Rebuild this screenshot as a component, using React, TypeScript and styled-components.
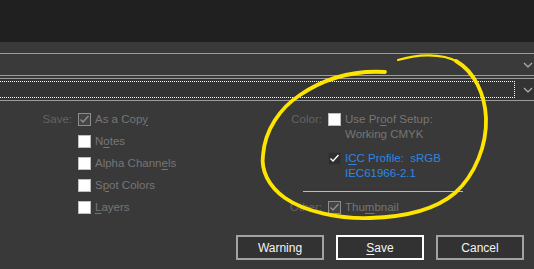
import React from "react";
import styled, { createGlobalStyle } from "styled-components";

const Global = createGlobalStyle`
  html, body { margin: 0; padding: 0; }
  body {
    background: #393939;
    font-family: "Liberation Sans", Arial, sans-serif;
    font-size: 11.5px;
    overflow: hidden;
  }
`;

const Page = styled.div`
  position: relative;
  width: 534px;
  height: 269px;
  background: #393939;
  display: flex;
  flex-direction: column;
  overflow: hidden;
`;

const TopBar = styled.div`
  height: 42px;
  background: #202020;
  flex: none;
`;

const Combo = styled.div<{ $focused?: boolean }>`
  box-sizing: border-box;
  height: 23px;
  margin-top: ${(p) => (p.$focused ? "2px" : "11px")};
  border-top: 1px solid #9c9c9c;
  border-bottom: 1px solid #9c9c9c;
  background: ${(p) => (p.$focused ? "#333333" : "#3a3a3a")};
  display: flex;
  align-items: center;
  padding: 2px 0;
  flex: none;
`;

const FocusRect = styled.div`
  box-sizing: border-box;
  height: 17px;
  width: 516px;
  margin-left: -1px;
  border: 1px dotted #ffffff;
  border-left: none;
  flex: none;
`;

const ComboField = styled.div`
  width: 515px;
  flex: none;
`;

const Chevron = styled.svg`
  margin-left: 8px;
  flex: none;
`;

const Options = styled.div`
  display: flex;
  margin-top: 7px;
  flex: none;
`;

const LeftGroup = styled.div`
  width: 250px;
  display: grid;
  grid-template-columns: 78px auto;
  grid-auto-rows: 22px;
  align-items: center;
`;

const RightGroup = styled.div`
  display: grid;
  grid-template-columns: 78px auto;
  align-items: start;
`;

const GroupLabel = styled.div<{ $top?: number }>`
  color: #646464;
  text-align: right;
  padding-right: 6px;
  line-height: 15px;
  margin-top: ${(p) => p.$top ?? 0}px;
`;

const Row = styled.div<{ $top?: number }>`
  display: flex;
  align-items: flex-start;
  gap: 4px;
  margin-top: ${(p) => p.$top ?? 0}px;
`;

const Text = styled.div<{ $accent?: boolean }>`
  color: ${(p) => (p.$accent ? "#2f86e0" : "#767676")};
  line-height: 15px;
  white-space: pre;
  u { text-decoration-thickness: 1px; text-underline-offset: 2px; }
`;

type BoxKind = "off" | "disabledOn" | "on";

const Box = styled.span<{ $kind: BoxKind }>`
  box-sizing: border-box;
  width: 13px;
  height: 13px;
  margin-top: 1px;
  flex: none;
  display: flex;
  align-items: center;
  justify-content: center;
  border: 1px solid
    ${(p) => (p.$kind === "off" ? "#bdbdbd" : p.$kind === "disabledOn" ? "#8d8d8d" : "#363636")};
  background: ${(p) => (p.$kind === "off" ? "#ffffff" : p.$kind === "disabledOn" ? "#444444" : "#2e2e2e")};
`;

const Separator = styled.div`
  grid-column: 1 / -1;
  margin-left: 53px;
  margin-top: 7px;
  width: 160px;
  height: 1px;
  background: #bcbcbc;
`;

const Buttons = styled.div`
  display: flex;
  justify-content: flex-end;
  gap: 12px;
  padding-right: 10px;
  margin-top: 17px;
  flex: none;
`;

const Button = styled.button<{ $default?: boolean }>`
  box-sizing: border-box;
  width: 88px;
  height: 25px;
  background: #323232;
  border: 2px solid ${(p) => (p.$default ? "#ffffff" : "#a3a3a3")};
  color: #f4f4f4;
  font-family: "Liberation Sans", Arial, sans-serif;
  font-size: 12px;
  padding: 0;
  u { text-underline-offset: 2px; }
`;

const Annotation = styled.svg`
  position: absolute;
  left: 0;
  top: 0;
  pointer-events: none;
`;

function Check({ kind }: { kind: BoxKind }) {
  return (
    <Box $kind={kind}>
      {kind !== "off" && (
        <svg width="11" height="11" viewBox="0 0 11 11">
          <path
            d="M1.5 5.5 L4 8 L9.5 2"
            fill="none"
            stroke={kind === "on" ? "#ffffff" : "#8f8f8f"}
            strokeWidth="1.4"
          />
        </svg>
      )}
    </Box>
  );
}

function ChevronIcon() {
  return (
    <Chevron width="10" height="6" viewBox="0 0 10 6">
      <polyline points="1,1 5,5 9,1" fill="none" stroke="#b4b4b4" strokeWidth="1.2" />
    </Chevron>
  );
}

export default function App() {
  return (
    <Page>
      <Global />
      <TopBar />
      <Combo>
        <ComboField />
        <ChevronIcon />
      </Combo>
      <Combo $focused>
        <FocusRect />
        <ChevronIcon />
      </Combo>
      <Options>
        <LeftGroup>
          <GroupLabel>Save:</GroupLabel>
          <Row>
            <Check kind="disabledOn" />
            <Text>As a Cop<u>y</u></Text>
          </Row>
          <span />
          <Row>
            <Check kind="off" />
            <Text>N<u>o</u>tes</Text>
          </Row>
          <span />
          <Row>
            <Check kind="off" />
            <Text>Alpha Chann<u>e</u>ls</Text>
          </Row>
          <span />
          <Row>
            <Check kind="off" />
            <Text>S<u>p</u>ot Colors</Text>
          </Row>
          <span />
          <Row>
            <Check kind="off" />
            <Text><u>L</u>ayers</Text>
          </Row>
        </LeftGroup>
        <RightGroup>
          <GroupLabel $top={4}>Color:</GroupLabel>
          <Row $top={4}>
            <Check kind="off" />
            <Text>
              Use Pr<u>o</u>of Setup:{"\n"}Working CMYK
            </Text>
          </Row>
          <span />
          <Row $top={6}>
            <Check kind="on" />
            <Text $accent>
              I<u>C</u>C Profile:{"  "}sRGB{"\n"}IEC61966-2.1
            </Text>
          </Row>
          <Separator />
          <GroupLabel $top={5}>Other:</GroupLabel>
          <Row $top={5}>
            <Check kind="disabledOn" />
            <Text>Thu<u>m</u>bnail</Text>
          </Row>
        </RightGroup>
      </Options>
      <Buttons>
        <Button>Warning</Button>
        <Button $default>
          <u>S</u>ave
        </Button>
        <Button>Cancel</Button>
      </Buttons>
      <Annotation width="534" height="269" viewBox="0 0 534 269">
        <path d="M398,60 C415,55 440,52 458,62" fill="none" stroke="#fde500" strokeWidth="2.2" strokeLinecap="round" />
        <path
          d="M456,61 C475,72 485,95 486,118 C487,145 475,175 455,193 C435,210 405,217 370,218 C340,219 305,212 285,198 C268,186 261,170 263,155 C265,130 280,108 300,95 C322,80 350,70 385,72"
          fill="none"
          stroke="#fde500"
          strokeWidth="3.8"
          strokeLinecap="round"
        />
      </Annotation>
    </Page>
  );
}
